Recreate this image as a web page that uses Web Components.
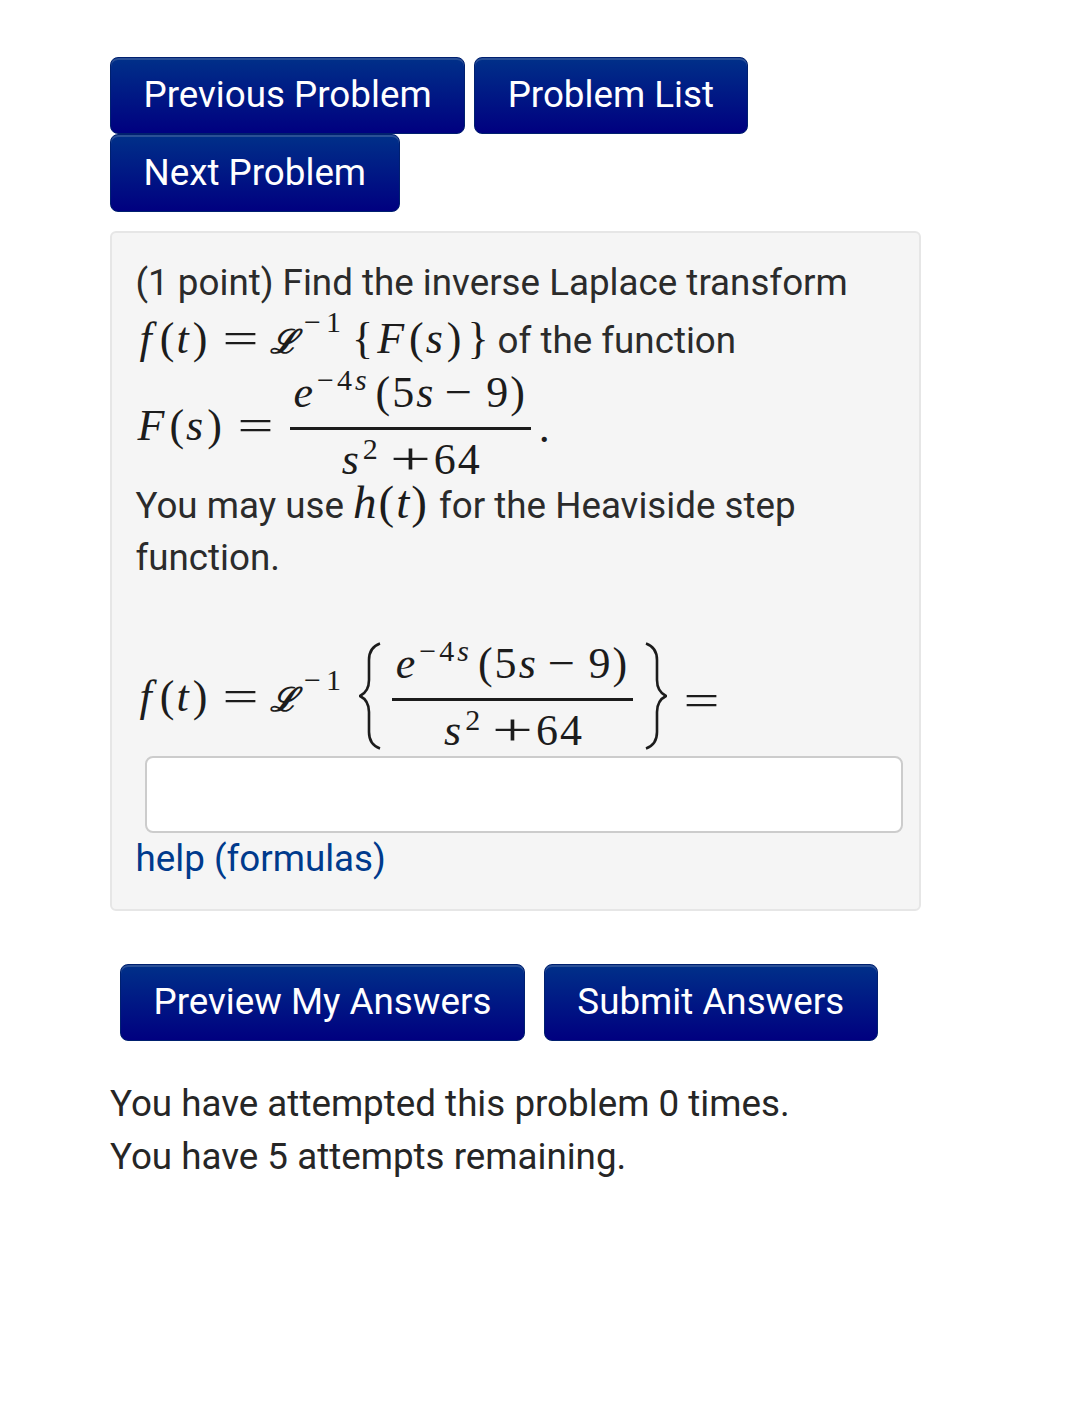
<!DOCTYPE html>
<html>
<head>
<meta charset="utf-8">
<style>
  html, body { margin: 0; background: #fff; }
  body { font: 36.75px/52px Roboto, sans-serif; color: #2b2b2b; }
  text-line m-math { line-height: 0; }
  block-line m-math { margin-top: 4px; }
  i.f { padding: 0 6px 0 4px; }
  i.t { padding-right: 2px; }
  i.F { padding: 0 3px 0 2px; }
  i.s { padding-right: 2px; }
</style>
</head>
<body>
<problem-page>
  <nav-row>
    <wb-button>Previous Problem</wb-button>
    <wb-button>Problem List</wb-button>
    <wb-button style="--h:78px">Next Problem</wb-button>
  </nav-row>
  <problem-panel>
    <text-line>(1 point) Find the inverse Laplace transform</text-line>
    <text-line height="58">
      <m-math><i class="f">f</i>(<i class="t">t</i>)<m-op eq>=</m-op><m-cal>ℒ</m-cal><m-sup style="vertical-align:21px;letter-spacing:5px">−1</m-sup><span style="margin-left:6px">{<i class="F">F</i>(<i class="s">s</i>)<span style="margin-left:4px">}</span></span></m-math><span style="margin-left:7px">of the function</span>
    </text-line>
    <block-line height="113">
      <m-math><i class="F">F</i>(<i class="s">s</i>)<m-op eq>=</m-op></m-math>
      <m-frac>
        <span slot="num"><i>e</i><m-sup style="margin-right:6px">−4<i>s</i></m-sup>(5<i>s</i><m-op minus>−</m-op>9)</span>
        <span slot="den"><i>s</i><m-sup style="vertical-align:15px">2</m-sup><m-op plus>+</m-op>64</span>
      </m-frac>
      <m-math class="dot">.</m-math>
    </block-line>
    <text-line>You may use <m-math big><i>h</i>(<i>t</i>)</m-math><span style="margin-left:1px"> for the Heaviside step</span></text-line>
    <text-line>function.</text-line>
    <block-line height="172" end>
      <m-math><i class="f">f</i>(<i class="t">t</i>)<m-op eq>=</m-op><m-cal>ℒ</m-cal><m-sup style="vertical-align:21px;letter-spacing:5px">−1</m-sup></m-math>
      <m-brace></m-brace>
      <m-frac tight>
        <span slot="num"><i>e</i><m-sup style="margin-right:6px">−4<i>s</i></m-sup>(5<i>s</i><m-op minus>−</m-op>9)</span>
        <span slot="den"><i>s</i><m-sup style="vertical-align:15px">2</m-sup><m-op plus>+</m-op>64</span>
      </m-frac>
      <m-brace right></m-brace>
      <m-math style="margin-top:12px"><m-op eq>=</m-op></m-math>
    </block-line>
    <answer-box></answer-box>
    <text-line><help-link>help (formulas)</help-link></text-line>
  </problem-panel>
  <submit-row>
    <wb-button>Preview My Answers</wb-button>
    <wb-button>Submit Answers</wb-button>
  </submit-row>
  <attempt-note>
    You have attempted this problem 0 times.<br>
    You have 5 attempts remaining.
  </attempt-note>
</problem-page>

<script>
// small helper so each element is just a style + markup string
function define(name, html, extra) {
  const template = document.createElement('template');
  template.innerHTML = html;
  class El extends HTMLElement {
    constructor() {
      super();
      this.attachShadow({ mode: 'open' }).appendChild(template.content.cloneNode(true));
    }
    connectedCallback() {
      if (extra) extra(this);
    }
  }
  customElements.define(name, El);
}

define('problem-page', `<style>
  :host { display: block; padding: 57px 0 0 110px; width: 811px; }
</style><slot></slot>`);

define('nav-row', `<style>
  :host { display: flex; flex-wrap: wrap; column-gap: 9px; }
</style><slot></slot>`);

define('submit-row', `<style>
  :host { display: flex; gap: 19px; margin: 53px 0 0 10px; }
</style><slot></slot>`);

define('wb-button', `<style>
  :host { display: block; }
  button {
    display: block;
    height: var(--h, 77px);
    padding: 0 32.5px 2px;
    border: 1px solid #00206f;
    border-radius: 8px;
    background: linear-gradient(#003089, #000080);
    box-shadow: inset 0 2px 0 #2a4f96;
    color: #fff;
    font: 36.75px Roboto, sans-serif;
    white-space: nowrap;
  }
</style><button><slot></slot></button>`);

define('problem-panel', `<style>
  :host {
    display: block;
    box-sizing: border-box;
    margin-top: 19px;
    height: 680px;
    padding: 24px 24px 24px 23.5px;
    background: #f5f5f5;
    border: 2px solid #e6e6e6;
    border-radius: 6px;
  }
</style><slot></slot>`);

define('text-line', `<style>
  :host { display: block; white-space: nowrap; }
</style><slot></slot>`, el => {
  const h = el.getAttribute('height');
  if (h) {
    el.style.height = h + 'px';
    el.style.lineHeight = (+h + 6) + 'px';
  }
});

define('block-line', `<style>
  :host { display: flex; align-items: center; white-space: nowrap; box-sizing: border-box; }
  :host([end]) { padding-top: 48px; }
</style><slot></slot>`, el => {
  el.style.height = el.getAttribute('height') + 'px';
});

define('m-math', `<style>
  :host { display: inline; font: 44px "Liberation Serif", serif; letter-spacing: 2px; color: #1c1c1c; white-space: nowrap; }
  :host([big]) { font-size: 47px; }
  :host(.dot) { align-self: flex-end; margin: 0 0 27px 8px !important; }
</style><slot></slot>`);

define('m-op', `<style>
  :host { display: inline-block; letter-spacing: 0; }
  :host([eq]) { margin: 0 17px 0 19px; transform: scaleX(1.45); }
  :host([minus]) { margin: 0 15px 0 11px; transform: scaleX(1.1); }
  :host([plus]) { margin: 0 11px 0 17px; transform: scaleX(1.65); }
</style><slot></slot>`);

define('m-cal', `<style>
  :host { display: inline-block; width: 32px; font: italic 700 33px "DejaVu Serif", serif; letter-spacing: 0; }
</style><slot></slot>`);

define('m-sup', `<style>
  :host { display: inline; font-size: 30px; line-height: 0; letter-spacing: 3px; vertical-align: 17px; margin-left: 2px; }
</style><slot></slot>`);

define('m-frac', `<style>
  :host {
    display: inline-flex; flex-direction: column; align-items: center;
    width: 241px; margin-left: 5px; padding-top: 2px;
    font: 44px "Liberation Serif", serif; letter-spacing: 2px; color: #1c1c1c;
  }
  :host([tight]) { margin-left: 11px; }
  .num { display: block; height: 60px; line-height: 52px; }
  .den { display: block; height: 52px; line-height: 60px; padding-left: 3px; }
  .rule { width: 100%; height: 3px; background: #1c1c1c; }
</style><span class="num"><slot name="num"></slot></span><span class="rule"></span><span class="den"><slot name="den"></slot></span>`);

define('m-brace', `<style>
  :host { display: block; width: 22px; height: 108px; margin-left: 13px; margin-top: 3px; }
  :host([right]) { transform: scaleX(-1); margin: 3px 3px 0 12px; }
  svg { display: block; }
</style><svg width="22" height="108" viewBox="0 0 22 108"><path d="M21 1.5 C14 4 10 9 10 18 L10 38 C10 46 7 51 1 54 C7 57 10 62 10 70 L10 90 C10 99 14 104 21 106.5" fill="none" stroke="#1c1c1c" stroke-width="2.6"/></svg>`);

define('answer-box', `<style>
  :host {
    display: block; box-sizing: border-box;
    width: 758px; height: 77px; margin-left: 9.5px;
    background: #fff;
    border: 2px solid #ccc;
    border-radius: 8px;
  }
</style>`);

define('help-link', `<style>
  :host { color: #003a8c; }
</style><slot></slot>`);

define('attempt-note', `<style>
  :host { display: block; margin-top: 36px; line-height: 53px; color: #262626; white-space: nowrap; }
</style><slot></slot>`);
</script>
</body>
</html>
